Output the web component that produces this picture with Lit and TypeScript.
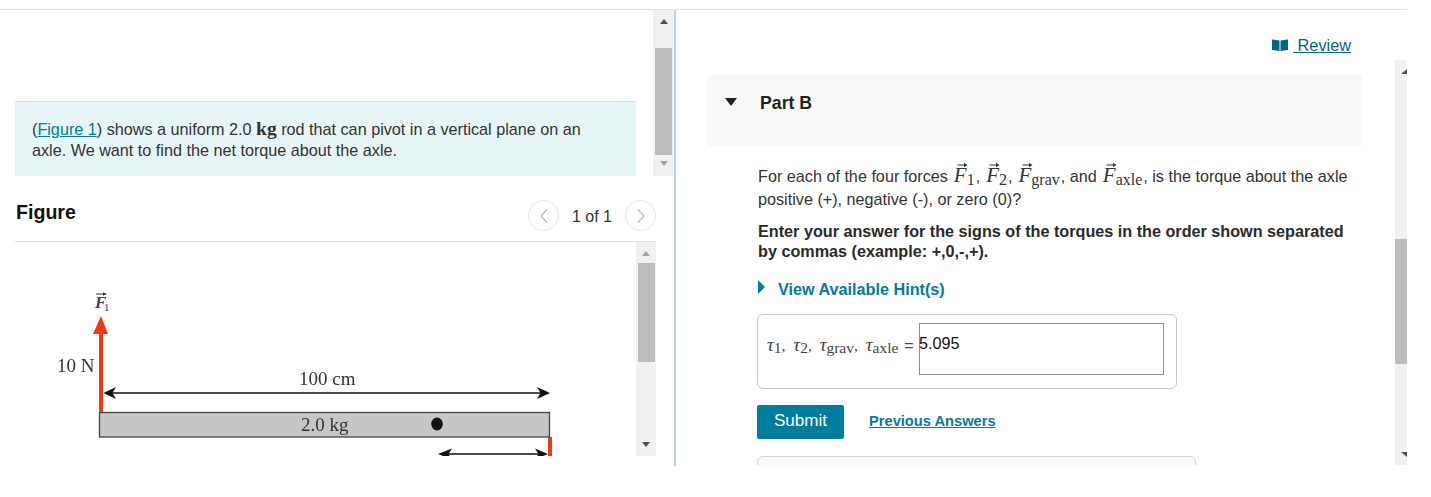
import { LitElement, html, css, svg } from "lit";
import { customElement } from "lit/decorators.js";

const vec = (base: unknown, sub: string) => html`<span class="mi"><svg class="arr" width="11" height="6" viewBox="0 0 11 6"><path d="M0.5 3H9" stroke="#333" stroke-width="1"/><path d="M7 0.8L10.5 3L7 5.2Z" fill="#333"/></svg><i>${base}</i><sub>${sub}</sub></span>`;

const tau = (sub: string) => html`<span class="tau"><i>τ</i><sub>${sub}</sub></span>`;

const bar = (kind: string) => html`<div class="sb ${kind}"><span class="up"></span><span class="thumb"></span><span class="dn"></span></div>`;

const figure = svg`
<svg class="fig" width="636" height="214" viewBox="0 242 636 214">
  <g class="blur">
    <rect x="99.5" y="412.500" width="450" height="24.500" fill="#c6c6c6" stroke="#444" stroke-width="1.3"/>
    <rect x="99" y="332" width="4" height="80" fill="#f6360f"/>
    <path d="M101 316L108 334H93Z" fill="#f6360f"/>
    <rect x="548" y="437" width="4" height="20" fill="#f6360f"/>
    <path d="M108 393H545" stroke="#111" stroke-width="1.300"/>
    <path d="M103.500 393L116 387L112.500 393L116 399Z" fill="#111"/>
    <path d="M550 393L537 387L540.500 393L537 399Z" fill="#111"/>
    <path d="M442 454H545" stroke="#111" stroke-width="1.300"/>
    <path d="M438 454L452 448.500L448.500 454L452 459.500Z" fill="#111"/>
    <path d="M548 454L535 448.500L538.500 454L535 459.500Z" fill="#111"/>
    <ellipse cx="437" cy="424" rx="5.800" ry="6.500" fill="#111"/>
    <text x="57" y="372" class="t">10 N</text>
    <text x="299" y="385" class="t">100 cm</text>
    <text x="301" y="431" class="t">2.0 kg</text>
    <text x="95" y="308" class="f">F</text>
    <text x="104" y="311" class="s">1</text>
    <path d="M96 294H105" stroke="#333" stroke-width="1"/>
    <path d="M103 292.200L107 294L103 295.800Z" fill="#333"/>
  </g>
</svg>`;

@customElement("app-root")
export class AppRoot extends LitElement {
  static styles = css`
    :host {
      display: block;
      width: 1407px;
      height: 497px;
      overflow: hidden;
      padding-top: 9px;
      box-sizing: border-box;
      font-family: "Liberation Sans", Arial, sans-serif;
      color: #333;
      font-size: 16.2px;
      background: #fff;
    }
    a { color: #007c9e; }
    .cols {
      display: flex;
      height: 456px;
      border-top: 1px solid #e2e2e2;
    }
    .left {
      width: 674px;
      flex: none;
      overflow: hidden;
      border-right: 2px solid #bcd0e2;
    }
    .upper {
      display: flex;
      height: 166px;
      padding-left: 15px;
    }
    .uppermain {
      width: 621px;
      padding-top: 91px;
      flex: none;
    }
    .intro {
      height: 75px;
      box-sizing: border-box;
      background: #e6f5f6;
      border-top: 1px solid #dbe5e8;
      padding: 16px 40px 0 17px;
      line-height: 21px;
      width: 621px;
    }
    .kg { font-family: "Liberation Serif", serif; font-weight: 700; font-size: 19.5px; }
    .sb {
      display: flex;
      flex-direction: column;
      align-items: center;
      background: #f1f1f1;
      flex: none;
      box-sizing: border-box;
      overflow: hidden;
    }
    .sb .thumb { display: block; background: #bdbdbd; flex: none; }
    .sb .up, .sb .dn { display: block; width: 0; height: 0; flex: none; border-left: 4.5px solid transparent; border-right: 4.5px solid transparent; }
    .sb .up { border-bottom: 5px solid #505050; }
    .sb .dn { border-top: 5px solid #505050; }
    .sb.a { width: 21px; height: 166px; margin-left: 17px; }
    .sb.a .up { margin-top: 9px; }
    .sb.a .thumb { width: 17px; height: 107px; margin-top: 24px; }
    .sb.a .dn { margin-top: 6px; border-top-color: #a3a3a3; }
    .sb.b { width: 20px; height: 214px; }
    .sb.b .up { margin-top: 9px; border-bottom-color: #a3a3a3; }
    .sb.b .thumb { width: 17px; height: 99px; margin-top: 7px; }
    .sb.b .dn { margin-top: 80px; }
    .sb.c { width: 12px; height: 405px; align-items: flex-start; }
    .sb.c .up { margin: 9px 0 0 6px; border-left-width: 6px; border-right-width: 6px; border-bottom-width: 5px; }
    .sb.c .thumb { width: 12px; height: 125px; margin-top: 165px; }
    .sb.c .dn { margin: 88px 0 0 6px; border-left-width: 6px; border-right-width: 6px; border-top-width: 5px; }
    .fighead {
      margin-left: 15px;
      width: 641px;
      height: 66px;
      box-sizing: border-box;
      border-bottom: 1px solid #e0e0e0;
      display: flex;
      align-items: flex-start;
    }
    .fighead h2 {
      margin: 25px auto 0 1px;
      font-size: 19.6px;
      line-height: 22px;
      font-weight: 700;
      color: #111;
    }
    .pager { display: flex; align-items: center; margin-top: 24px; }
    .pager .btn {
      width: 29px;
      height: 29px;
      border: 1px solid #e6e6e6;
      border-radius: 50%;
      display: flex;
      align-items: center;
      justify-content: center;
    }
    .pager .count { width: 66px; text-align: center; margin-top: 2px; font-size: 16px; }
    .figbody { display: flex; margin-left: 15px; width: 641px; height: 214px; }
    .figimg { width: 621px; overflow: hidden; }
    .fig { display: block; margin-left: -15px; }
    .blur { filter: blur(0.4px); }
    .t { font-family: "Liberation Serif", serif; font-size: 19px; fill: #333; }
    .f { font-family: "Liberation Serif", serif; font-size: 17px; font-style: italic; font-weight: 700; fill: #444; }
    .s { font-family: "Liberation Serif", serif; font-size: 11px; fill: #333; }
    .right { flex: 1; min-width: 0; display: flex; flex-direction: column; overflow: hidden; }
    .review {
      height: 50px;
      box-sizing: border-box;
      padding: 25px 56px 0 0;
      display: flex;
      justify-content: flex-end;
      align-items: flex-start;
      line-height: 20px;
      font-size: 16.3px;
    }
    .review a { display: flex; align-items: center; color: #00667f; text-decoration: none; }
    .review a span { white-space: pre; text-decoration: underline; }
    .review svg { margin-right: 5px; }
    .rbody { display: flex; height: 405px; }
    .rmain { width: 719px; padding-left: 31px; flex: none; overflow: hidden; box-sizing: border-box; }
    .part {
      width: 655px;
      height: 71px;
      margin-top: 15px;
      background: #f9f9f9;
      display: flex;
      align-items: flex-start;
      padding: 18px 0 0 18px;
      box-sizing: border-box;
      font-weight: 700;
      font-size: 17.7px;
      line-height: 20px;
      color: #222;
    }
    .tri { width: 0; height: 0; border-left: 6.5px solid transparent; border-right: 6.5px solid transparent; border-top: 8px solid #222; margin: 5px 23px 0 0; }
    .content { padding-left: 51px; width: 610px; }
    .q { margin: 19px 0 0; line-height: 23px; width: 600px; }
    .mi { position: relative; display: inline-block; font-family: "Liberation Serif", serif; line-height: 16px; margin: 0 1px 0 1.5px; }
    .mi i { font-family: "Liberation Serif", serif; font-size: 21px; }
    .mi sub { font-size: 16px; font-family: "Liberation Serif", serif; vertical-align: -3px; line-height: 0; }
    .arr { position: absolute; left: 3px; top: -5px; }
    .bold { margin: 10px 0 0; font-weight: 700; line-height: 20px; font-size: 16.2px; width: 600px; color: #2a2a2a; }
    .hint { display: flex; align-items: flex-start; margin-top: 18px; color: #007c9e; font-weight: 700; font-size: 16.2px; line-height: 20px; }
    .hint span { width: 0; height: 0; border-top: 7px solid transparent; border-bottom: 7px solid transparent; border-left: 7px solid #007c9e; margin: 1px 13px 0 0; }
    .answer {
      margin-top: 15px;
      margin-left: -1px;
      width: 420px;
      height: 75px;
      box-sizing: border-box;
      border: 1px solid #c9c9c9;
      border-radius: 6px;
      padding: 7px 12px 0 9px;
      display: flex;
      align-items: flex-start;
    }
    .eqn { font-family: "Liberation Serif", serif; font-size: 15.5px; margin-top: 13px; line-height: 20px; white-space: nowrap; width: 152px; color: #444; word-spacing: 4px; }
    .tau i { font-size: 19px; }
    .tau sub { font-size: 15.5px; vertical-align: -2px; line-height: 0; }
    .eqn .eq { font-family: "Liberation Sans", sans-serif; font-size: 16px; margin-left: -2px; }
    .ans {
      width: 245px;
      height: 52px;
      box-sizing: border-box;
      border: 1px solid #8d8d8d;
      font-size: 16.2px;
      color: #111;
      line-height: 18px;
      padding: 10px 0 0;
      margin-top: 1px;
      text-indent: -1px;
    }
    .actions { display: flex; align-items: center; margin: 16px 0 0 -1px; }
    .submit {
      width: 87px;
      height: 34px;
      background: #007c9e;
      color: #fff;
      font-size: 17px;
      text-align: center;
      line-height: 32px;
      border-radius: 2px;
    }
    .prev { margin: -2px 0 0 25px; font-weight: 700; font-size: 14.67px; text-decoration-thickness: 1px; }
    .next {
      margin: 17px 0 0 -1px;
      width: 439px;
      height: 20px;
      box-sizing: border-box;
      background: #f9f9f9;
      border: 1px solid #d4d4d4;
      border-radius: 6px 6px 0 0;
    }
  `;

  render() {
    return html`
      <div class="cols">
        <div class="left">
          <div class="upper">
            <div class="uppermain">
              <div class="intro">(<a href="#">Figure 1</a>) shows a uniform 2.0 <span class="kg">kg</span> rod that can pivot in a vertical plane on an axle. We want to find the net torque about the axle.</div>
            </div>
            ${bar("a")}
          </div>
          <div class="fighead">
            <h2>Figure</h2>
            <div class="pager">
              <span class="btn"><svg width="10" height="16" viewBox="0 0 10 16"><path d="M8 1.500L2 8L8 14.500" fill="none" stroke="#b9c4cc" stroke-width="1.500"/></svg></span>
              <span class="count">1 of 1</span>
              <span class="btn"><svg width="10" height="16" viewBox="0 0 10 16"><path d="M2 1.500L8 8L2 14.500" fill="none" stroke="#b9c4cc" stroke-width="1.500"/></svg></span>
            </div>
          </div>
          <div class="figbody">
            <div class="figimg">${figure}</div>
            ${bar("b")}
          </div>
        </div>
        <div class="right">
          <div class="review">
            <a href="#"><svg width="16" height="12" viewBox="0 0 16 12"><path d="M0 0.500L7.500 1.500V12L0 11ZM16 0.500L8.500 1.500V12L16 11Z" fill="#00667f"/></svg><span> Review</span></a>
          </div>
          <div class="rbody">
            <div class="rmain">
              <div class="part"><span class="tri"></span>Part B</div>
              <div class="content">
                <p class="q">For each of the four forces ${vec("F", "1")}, ${vec("F", "2")}, ${vec("F", "grav")}, and ${vec("F", "axle")}, is the torque about the axle positive (+), negative (-), or zero (0)?</p>
                <p class="bold">Enter your answer for the signs of the torques in the order shown separated by commas (example: +,0,-,+).</p>
                <div class="hint"><span></span>View Available Hint(s)</div>
                <div class="answer">
                  <div class="eqn">${tau("1")}, ${tau("2")}, ${tau("grav")}, ${tau("axle")} <span class="eq">=</span></div>
                  <div class="ans">5.095</div>
                </div>
                <div class="actions">
                  <div class="submit">Submit</div>
                  <a class="prev" href="#">Previous Answers</a>
                </div>
                <div class="next"></div>
              </div>
            </div>
            ${bar("c")}
          </div>
        </div>
      </div>
    `;
  }
}
